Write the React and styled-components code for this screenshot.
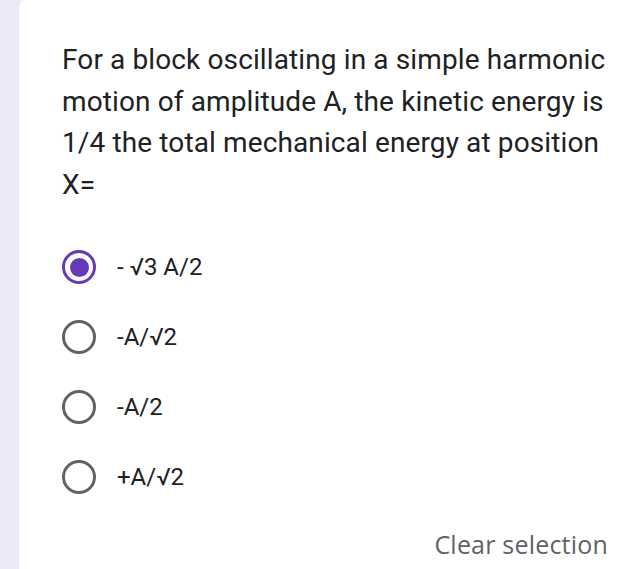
import React from 'react';
import styled, { createGlobalStyle } from "styled-components"

const Global = createGlobalStyle`
  html, body {
    margin: 0;
    padding: 0;
    background: #ede9f8;
    overflow: hidden;
  }
`

const options = ["- \u221A3 A/2", "-A/\u221A2", "-A/2", "+A/\u221A2"]

function App() {
  const selected = 0
  return (
    <>
      <Global />
      <Card>
        <Question>
          For a block oscillating in a simple harmonic motion of amplitude A, the kinetic energy is 1/4 the total mechanical energy at position X=
        </Question>
        <Options>
          {options.map((o, i) => (
            <Option key={o}>
              <Radio checked={i === selected} />
              <Label>{o}</Label>
            </Option>
          ))}
        </Options>
        <Footer>
          <Clear>Clear selection</Clear>
        </Footer>
      </Card>
    </>
  );
}

const Card = styled.div`
  margin: -3px 0 0 19px;
  height: 600px;
  background: #fff;
  border-radius: 12px 0 0 12px;
  padding: 42px 27px 0 43px;
  box-sizing: border-box;
`

const Question = styled.p`
  margin: 0;
  width: 552px;
  font-family: Roboto, sans-serif;
  font-size: 28px;
  letter-spacing: 0.12px;
  line-height: 41.5px;
  color: #202124;
`

const Options = styled.div`
  display: flex;
  flex-direction: column;
  margin-top: 27px;
`

const Option = styled.div`
  display: flex;
  align-items: center;
  height: 70px;
`

const Radio = styled.span`
  width: 34px;
  height: 34px;
  box-sizing: border-box;
  border-radius: 50%;
  border: 3px solid ${p => p.checked ? "#673ab7" : "#5f6368"};
  display: flex;
  align-items: center;
  justify-content: center;
  flex-shrink: 0;
  &::after {
    content: "";
    display: ${p => p.checked ? "block" : "none"};
    width: 19px;
    height: 19px;
    border-radius: 50%;
    background: #673ab7;
  }
`

const Label = styled.span`
  margin-left: 21px;
  font-family: Roboto, sans-serif;
  font-size: 24px;
  color: #202124;
`

const Footer = styled.div`
  display: flex;
  justify-content: flex-end;
  margin-top: 17px;
`

const Clear = styled.span`
  font-family: "Open Sans", sans-serif;
  font-size: 25px;
  letter-spacing: 0.2px;
  line-height: 30px;
  font-weight: 500;
  color: #5f6368;
`

export default App;
